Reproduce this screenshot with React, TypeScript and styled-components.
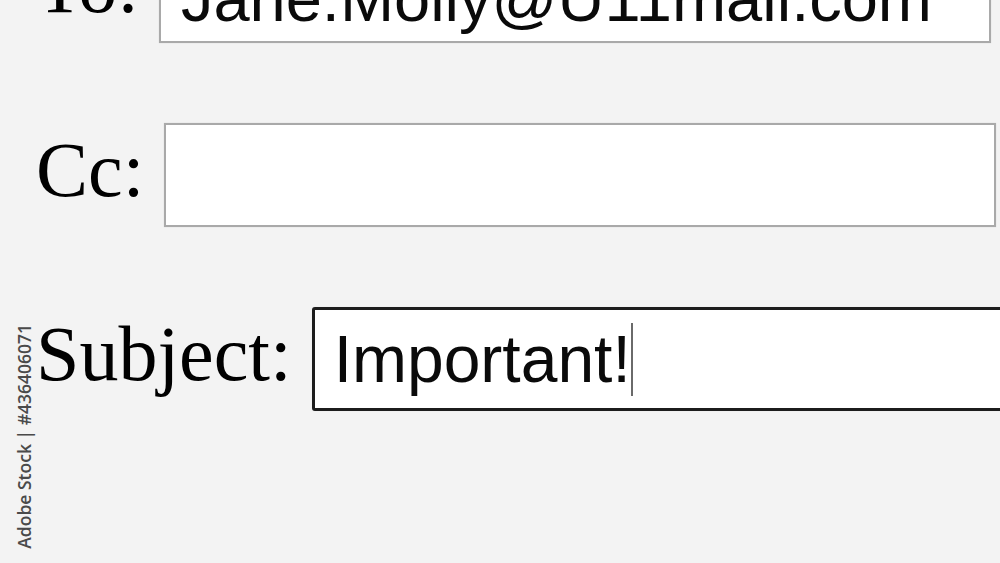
import * as React from 'react';
import styled, { createGlobalStyle, css } from 'styled-components';

const GlobalStyle = createGlobalStyle`
  html, body {
    margin: 0;
    padding: 0;
    background: #f3f3f3;
    overflow: hidden;
  }
`

const Page = styled.div`
  position: relative;
  width: 1000px;
  height: 563px;
  overflow: hidden;
  background: #f3f3f3;
`

const Form = styled.div`
  display: flex;
  flex-direction: column;
  gap: 80px;
  margin-top: -61px;
  padding-left: 36px;
`

const Row = styled.div`
  display: flex;
  align-items: center;
  gap: 20px;
`

const Label = styled.label`
  font-family: "Liberation Serif", "Times New Roman", serif;
  font-size: 78px;
  line-height: 1;
  padding-bottom: 10px;
  color: #000;
  white-space: nowrap;
  flex-shrink: 0;
`

// $shift nudges the text baseline down (the To value sits a little low)
const Field = styled.div<{ $focused?: boolean; $shift?: number }>`
  box-sizing: border-box;
  flex-shrink: 0;
  width: 832px;
  height: 104px;
  display: flex;
  align-items: center;
  padding: ${(p) => (p.$shift ?? 0)}px 20px 0;
  background: #fff;
  border: 2px solid #a9a9a9;
  box-shadow: 0 0 1px rgba(0, 0, 0, 0.15);
  font-family: "Liberation Sans", Arial, sans-serif;
  font-size: 66px;
  line-height: 1;
  color: #0a0a0a;
  white-space: nowrap;

  ${(p) => p.$focused && css`
    border: 3px solid #1c1c1c;
    border-radius: 3px;
    padding-left: 19px;
  `}
`

const EmailValue = styled.span`
  font-size: 65px;
`

const Caret = styled.span`
  display: inline-block;
  width: 2px;
  height: 73px;
  margin-left: 0;
  background: #6a6a6a;
`

const Credit = styled.div`
  position: absolute;
  left: 12px;
  bottom: 14px;
  writing-mode: vertical-rl;
  transform: rotate(180deg);
  font-family: "Open Sans", "Noto Sans", sans-serif;
  font-size: 17.5px;
  font-weight: 600;
  color: #4a4a4a;
  white-space: nowrap;
`

export default function App() {
  return (
    <Page>
      <GlobalStyle />
      <Form>
        <Row>
          <Label>To:</Label>
          <Field $shift={14}>
            <EmailValue>Jane.Molly@U11mail.com</EmailValue>
          </Field>
        </Row>
        <Row>
          <Label>Cc:</Label>
          <Field />
        </Row>
        <Row>
          <Label>Subject:</Label>
          <Field $focused>
            Important!<Caret />
          </Field>
        </Row>
      </Form>
      <Credit>Adobe Stock | #436406071</Credit>
    </Page>
  )
}
